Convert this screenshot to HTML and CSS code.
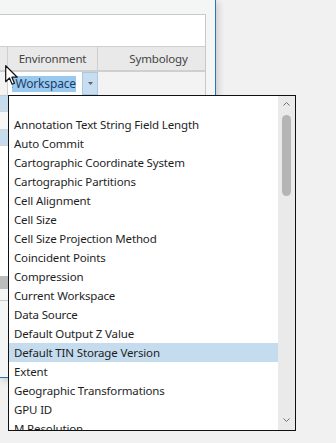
FILE: index.html
```html
<!DOCTYPE html>
<html lang="en">
<head>
  <meta charset="UTF-8">
  <title>Environment Picker</title>
  <link rel="stylesheet" href="styles.css">
</head>
<body>

  <div class="window">
    <div class="grid">
      <div class="grid-top"></div>
      <div class="grid-head">
        <div class="cell stub"></div>
        <div class="cell env">Environment</div>
        <div class="cell sym">Symbology</div>
      </div>
      <div class="grid-row">
        <div class="cell stub"></div>
        <div class="cell env">
          <div class="combo">
            <div class="combo-text">
              <div class="combo-clip"><span class="combo-sel">Current Workspace</span></div>
            </div>
            <div class="combo-btn">
              <svg width="5" height="3" viewBox="0 0 5 3"><path d="M0 0h5L2.5 3z" fill="#5a6570"/></svg>
            </div>
          </div>
        </div>
        <div class="cell sym"></div>
      </div>
      <div class="grid-line picked"></div>
      <div class="grid-line tall"></div>
      <div class="grid-line picked"></div>
      <div class="grid-empty"></div>
      <div class="grid-hbar"></div>
      <div class="grid-foot"></div>
    </div>
  </div>

  <!-- mouse pointer -->
  <svg class="pointer" width="13" height="20" viewBox="0 0 13 20">
    <path d="M0.7 0.7v16l3.8-3.7 2.6 6.2 2.4-1-2.6-6h5.4z" fill="#fff" stroke="#111" stroke-width="1.2" stroke-linejoin="round"/>
  </svg>

  <div class="dropdown">
    <div class="list">
      <div class="item"></div>
      <div class="item">Annotation Text String Field Length</div>
      <div class="item">Auto Commit</div>
      <div class="item">Cartographic Coordinate System</div>
      <div class="item">Cartographic Partitions</div>
      <div class="item">Cell Alignment</div>
      <div class="item">Cell Size</div>
      <div class="item">Cell Size Projection Method</div>
      <div class="item">Coincident Points</div>
      <div class="item">Compression</div>
      <div class="item">Current Workspace</div>
      <div class="item">Data Source</div>
      <div class="item">Default Output Z Value</div>
      <div class="item selected">Default TIN Storage Version</div>
      <div class="item">Extent</div>
      <div class="item">Geographic Transformations</div>
      <div class="item">GPU ID</div>
      <div class="item">M Resolution</div>
    </div>
    <div class="scroll">
      <svg class="arrow up" width="7" height="4" viewBox="0 0 7 4"><path d="M0.5 3.5l3-3 3 3" fill="none" stroke="#707070" stroke-width="1"/></svg>
      <div class="thumb"></div>
      <svg class="arrow down" width="7" height="4" viewBox="0 0 7 4"><path d="M0.5 0.5l3 3 3-3" fill="none" stroke="#707070" stroke-width="1"/></svg>
    </div>
  </div>

</body>
</html>
```

FILE: styles.css
```css
* {
  box-sizing: border-box;
}

body {
  margin: 0;
  width: 336px;
  height: 443px;
  overflow: hidden;
  position: relative;
  background: #f1f1f1;
  font-family: "Noto Sans", "Open Sans", sans-serif;
  font-size: 11.5px;
  letter-spacing: -0.15px;
  color: #1e1e1e;
}

.window {
  width: 216px;
  height: 378px;
  padding-top: 14px;
  background: #f4f6f6;
  border-right: 1px solid #2a72b8;
  border-bottom: 1px solid #2a72b8;
  box-shadow: 2px 2px 7px rgba(0, 0, 0, 0.18);
}

.grid {
  width: 206px;
  border-top: 1px solid #c9c9c9;
  border-right: 1px solid #c9c9c9;
}

.grid-top {
  height: 31px;
  background: #fff;
}

.grid-head,
.grid-row {
  display: flex;
  border-top: 1px solid #cfcfcf;
}

.grid-head {
  height: 25px;
  background: #e9e9e9;
  color: #444;
}

.grid-row {
  height: 25px;
  border-bottom: 1px solid #c9c9c9;
  background: #f3f3f3;
}

.cell {
  display: flex;
  align-items: center;
  justify-content: center;
  min-width: 0;
  flex-shrink: 0;
  border-right: 1px solid #cfcfcf;
}

.grid-head .cell {
  border-bottom: 1px solid #cfcfcf;
}

.stub {
  width: 8px;
}

.env {
  width: 90px;
}

.sym {
  width: 107px;
  padding-left: 14px;
  border-right: none;
}

.grid-row .env {
  align-items: stretch;
  border-right: none;
}

.combo {
  flex: 1;
  min-width: 0;
  display: flex;
}

.combo-text {
  flex: 1;
  min-width: 0;
  display: flex;
  align-items: center;
  padding: 0 6px 0 4px;
  background: #fff;
  overflow: hidden;
}

.combo-clip {
  flex: 1;
  min-width: 0;
  display: flex;
  justify-content: flex-end;
  overflow: hidden;
}

.combo-sel {
  flex-shrink: 0;
  white-space: nowrap;
  font-size: 12px;
  line-height: 16px;
  background: #99c9ef;
  color: #1d3d66;
}

.combo-btn {
  width: 16px;
  flex-shrink: 0;
  display: flex;
  align-items: center;
  justify-content: center;
  background: #c8ddf0;
  border: 1px solid #a8c8e6;
}

.grid-line {
  height: 16px;
  border-bottom: 1px solid #d4d4d4;
  background: #f7f7f7;
}

.grid-line.tall {
  height: 18px;
}

.grid-line.picked {
  background: #c5dcee;
}

.grid-empty {
  height: 130px;
  background: #fff;
}

.grid-hbar {
  height: 13px;
  background: #bcbcbc;
}

.grid-foot {
  height: 12px;
  background: #f5f5f5;
  border-bottom: 1px solid #c9c9c9;
}

.pointer {
  position: absolute;
  left: 5px;
  top: 65px;
  z-index: 3;
}

.dropdown {
  position: absolute;
  left: 8px;
  top: 95px;
  width: 288px;
  height: 336px;
  display: flex;
  background: #fff;
  border: 1px solid #111;
  z-index: 2;
}

.list {
  flex: 1;
  overflow: hidden;
}

.item {
  height: 19px;
  line-height: 19px;
  padding-left: 5px;
  white-space: nowrap;
}

.item.selected {
  background: #c5dcee;
}

.scroll {
  width: 17px;
  position: relative;
  background: #eaeaea;
}

.thumb {
  position: absolute;
  left: 4px;
  top: 19px;
  width: 9px;
  height: 81px;
  border-radius: 5px;
  background: #b5b5b5;
}

.arrow {
  position: absolute;
  left: 5px;
}

.arrow.up {
  top: 6px;
}

.arrow.down {
  bottom: 8px;
}
```
